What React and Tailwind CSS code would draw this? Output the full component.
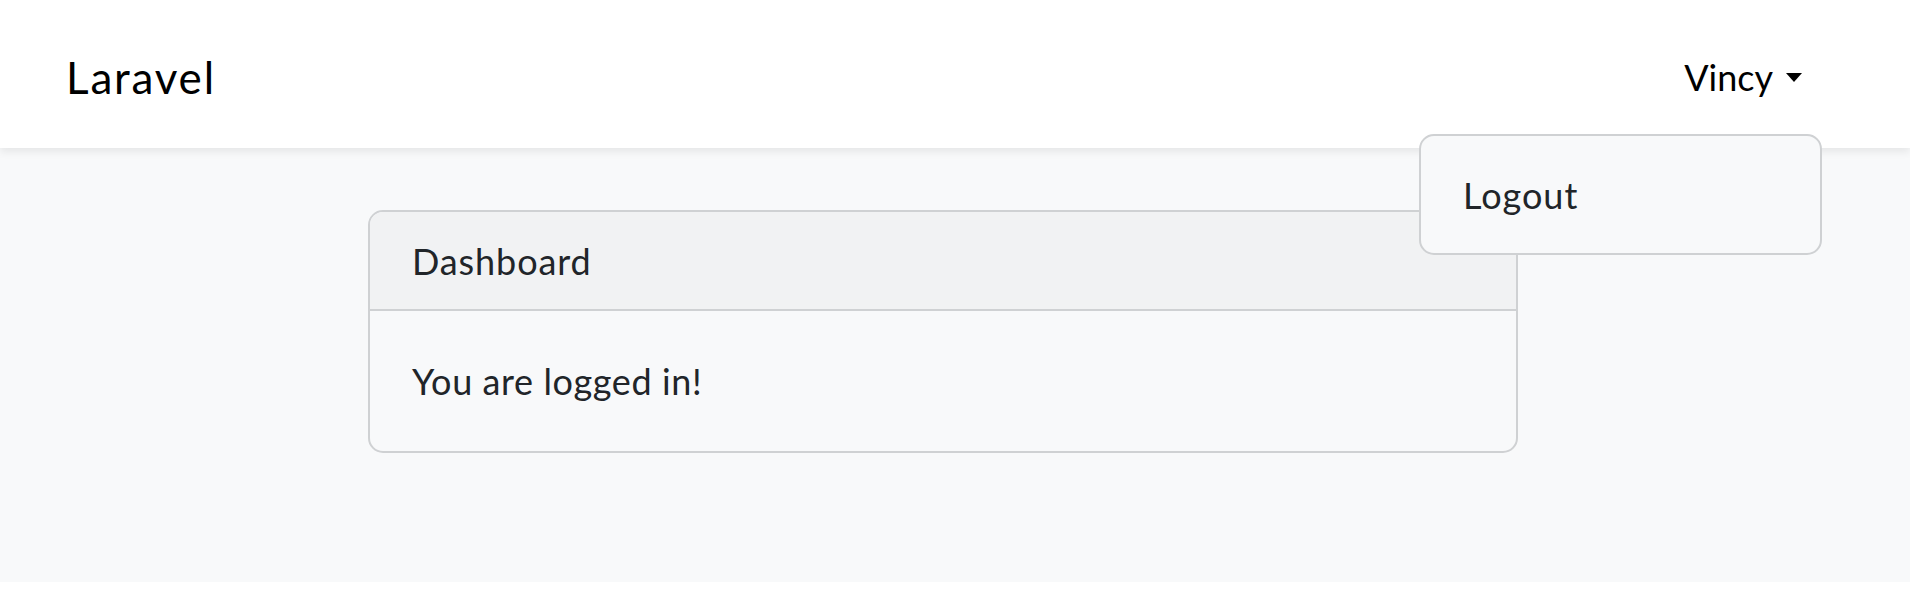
import React from "react";

function App() {
  return (
    <div className="min-h-[582px] bg-[#f8f9fa] text-[#212529] font-['Lato','Noto_Sans',sans-serif]">
      <nav className="relative h-[148px] bg-white shadow-[0_4px_8px_rgba(0,0,0,0.075)] flex items-center justify-between pt-[6px] pl-[66px] pr-[108px]">
        <a href="#" className="text-[44px] tracking-[1.8px] text-black leading-none">
          Laravel
        </a>
        <button className="flex items-center gap-[13px] text-[36px] text-black leading-none">
          <span>Vincy</span>
          <svg width="16" height="9" viewBox="0 0 16 9">
            <path d="M0 0 H16 L8 9 Z" fill="#000" />
          </svg>
        </button>

        {/* open dropdown */}
        <div className="absolute right-[88px] top-[134px] w-[403px] h-[121px] bg-[#f8f9fa] border-2 border-[#cfd1d3] rounded-[15px] flex items-center pl-[42px] z-10">
          <a href="#" className="text-[36px] tracking-[1px] text-[#212529] leading-none">
            Logout
          </a>
        </div>
      </nav>

      <main className="pt-[62px] pb-[129px]">
        <div className="ml-[368px] w-[1150px] border-2 border-[#cfd1d3] rounded-[15px] overflow-hidden">
          <div className="h-[99px] bg-[#f1f2f3] border-b-2 border-[#cfd1d3] flex items-center pl-[42px] text-[36px] tracking-[0.9px] leading-none">
            Dashboard
          </div>
          <div className="h-[140px] flex items-center pl-[42px] text-[36px] tracking-[0.6px] leading-none">
            You are logged in!
          </div>
        </div>
      </main>
    </div>
  );
}

export default App;
